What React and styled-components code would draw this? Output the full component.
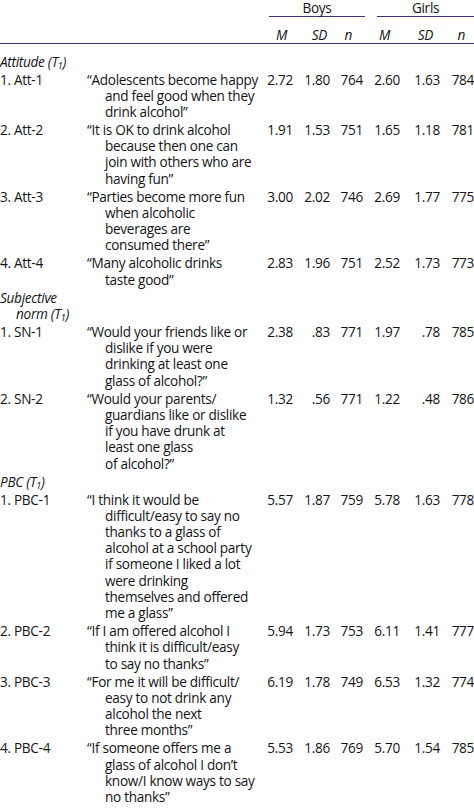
import React from 'react';
import styled, { createGlobalStyle } from 'styled-components';

const GlobalStyle = createGlobalStyle`
    html, body {
        margin: 0;
        padding: 0;
        background: #ffffff;
    }

    body {
        overflow: hidden;
    }
`;

const RULE = '#35357a';

const Table = styled.table`
    width: 474px;
    table-layout: fixed;
    border-collapse: collapse;
    font-family: "Open Sans", "Noto Sans", sans-serif;
    font-size: 13.6px;
    letter-spacing: -0.3px;
    line-height: 16.2px;
    color: #141414;
`;

const Col = styled.col`
    width: ${(props) => props.$w}px;
`;

const BlankHead = styled.th`
    padding: 0;
    border-bottom: ${(props) => (props.$ruled ? `1.5px solid ${RULE}` : 'none')};
`;

const GroupHead = styled.th`
    padding: 0;
    font-weight: normal;
    vertical-align: bottom;
`;

const GroupTitle = styled.div`
    margin: 0 ${(props) => props.$r}px 0 ${(props) => props.$l}px;
    padding-top: 1px;
    line-height: 14.5px;
    text-align: center;
    border-bottom: 1.5px solid ${RULE};
`;

const StatHead = styled.th`
    padding: 10px ${(props) => props.$pr}px 0 0;
    font-weight: normal;
    font-style: italic;
    text-align: right;
    line-height: 16px;
    border-bottom: 1.5px solid ${RULE};
`;

const Cell = styled.td`
    padding: ${(props) => (props.$first ? '10px' : '0.95px')} 0 0.95px 0;
    vertical-align: top;
    white-space: nowrap;
`;

const GroupLabel = styled(Cell)`
    font-style: italic;
    padding-left: 16px;
    text-indent: -16px;
`;

const ItemLabel = styled(Cell)``;

const ItemText = styled(Cell)`
    padding-left: 18px;
    text-indent: -18px;
`;

const Num = styled(Cell)`
    text-align: right;
`;

const Sub = styled.sub`
    font-size: 9px;
    line-height: 0;
    vertical-align: -2px;
`;

const rows = [
    { group: ['Attitude'] },
    {
        label: '1. Att-1',
        text: ['Adolescents become happy', 'and feel good when they', 'drink alcohol'],
        boys: ['2.72', '1.80', '764'],
        girls: ['2.60', '1.63', '784'],
    },
    {
        label: '2. Att-2',
        text: ['It is OK to drink alcohol', 'because then one can', 'join with others who are', 'having fun'],
        boys: ['1.91', '1.53', '751'],
        girls: ['1.65', '1.18', '781'],
    },
    {
        label: '3. Att-3',
        text: ['Parties become more fun', 'when alcoholic', 'beverages are', 'consumed there'],
        boys: ['3.00', '2.02', '746'],
        girls: ['2.69', '1.77', '775'],
    },
    {
        label: '4. Att-4',
        text: ['Many alcoholic drinks', 'taste good'],
        boys: ['2.83', '1.96', '751'],
        girls: ['2.52', '1.73', '773'],
    },
    { group: ['Subjective', 'norm'] },
    {
        label: '1. SN-1',
        text: ['Would your friends like or', 'dislike if you were', 'drinking at least one', 'glass of alcohol?'],
        boys: ['2.38', '.83', '771'],
        girls: ['1.97', '.78', '785'],
    },
    {
        label: '2. SN-2',
        text: ['Would your parents/', 'guardians like or dislike', 'if you have drunk at', 'least one glass', 'of alcohol?'],
        boys: ['1.32', '.56', '771'],
        girls: ['1.22', '.48', '786'],
    },
    { group: ['PBC'] },
    {
        label: '1. PBC-1',
        text: [
            'I think it would be',
            'difficult/easy to say no',
            'thanks to a glass of',
            'alcohol at a school party',
            'if someone I liked a lot',
            'were drinking',
            'themselves and offered',
            'me a glass',
        ],
        boys: ['5.57', '1.87', '759'],
        girls: ['5.78', '1.63', '778'],
    },
    {
        label: '2. PBC-2',
        text: ['If I am offered alcohol I', 'think it is difficult/easy', 'to say no thanks'],
        boys: ['5.94', '1.73', '753'],
        girls: ['6.11', '1.41', '777'],
    },
    {
        label: '3. PBC-3',
        text: ['For me it will be difficult/', 'easy to not drink any', 'alcohol the next', 'three months'],
        boys: ['6.19', '1.78', '749'],
        girls: ['6.53', '1.32', '774'],
    },
    {
        label: '4. PBC-4',
        text: ['If someone offers me a', 'glass of alcohol I don’t', 'know/I know ways to say', 'no thanks'],
        boys: ['5.53', '1.86', '769'],
        girls: ['5.70', '1.54', '785'],
    },
];

const Lines = ({ lines, quoted, suffix }) =>
    lines.map((line, i) => {
        const last = i === lines.length - 1;
        return (
            <React.Fragment key={i}>
                {i > 0 && <br />}
                {quoted && i === 0 ? '“' : ''}
                {line}
                {quoted && last ? '”' : ''}
                {last && suffix}
            </React.Fragment>
        );
    });

const TimeTag = () => (
    <>
        {' ('}
        <i>T</i>
        <Sub>1</Sub>
        {')'}
    </>
);

const App = () => {
    return (
        <>
            <GlobalStyle />
            <Table>
                <colgroup>
                    <Col $w={87} />
                    <Col $w={175} />
                    <Col $w={31} />
                    <Col $w={37} />
                    <Col $w={33} />
                    <Col $w={37} />
                    <Col $w={40} />
                    <Col $w={34} />
                </colgroup>
                <thead>
                    <tr>
                        <BlankHead />
                        <BlankHead />
                        <GroupHead colSpan={3}>
                            <GroupTitle $l={7} $r={-2}>Boys</GroupTitle>
                        </GroupHead>
                        <GroupHead colSpan={3}>
                            <GroupTitle $l={14} $r={0}>Girls</GroupTitle>
                        </GroupHead>
                    </tr>
                    <tr>
                        <BlankHead $ruled />
                        <BlankHead $ruled />
                        <StatHead $pr={6}>M</StatHead>
                        <StatHead $pr={3}>SD</StatHead>
                        <StatHead $pr={11}>n</StatHead>
                        <StatHead $pr={10}>M</StatHead>
                        <StatHead $pr={7}>SD</StatHead>
                        <StatHead $pr={9}>n</StatHead>
                    </tr>
                </thead>
                <tbody>
                    {rows.map((row, i) =>
                        row.group ? (
                            <tr key={i}>
                                <GroupLabel $first={i === 0}>
                                    <Lines lines={row.group} suffix={<TimeTag />} />
                                </GroupLabel>
                                <Cell $first={i === 0} colSpan={7} />
                            </tr>
                        ) : (
                            <tr key={i}>
                                <ItemLabel>{row.label}</ItemLabel>
                                <ItemText>
                                    <Lines lines={row.text} quoted />
                                </ItemText>
                                {row.boys.map((v, j) => (
                                    <Num key={`b${j}`}>{v}</Num>
                                ))}
                                {row.girls.map((v, j) => (
                                    <Num key={`g${j}`}>{v}</Num>
                                ))}
                            </tr>
                        )
                    )}
                </tbody>
            </Table>
        </>
    );
};

export default App;
